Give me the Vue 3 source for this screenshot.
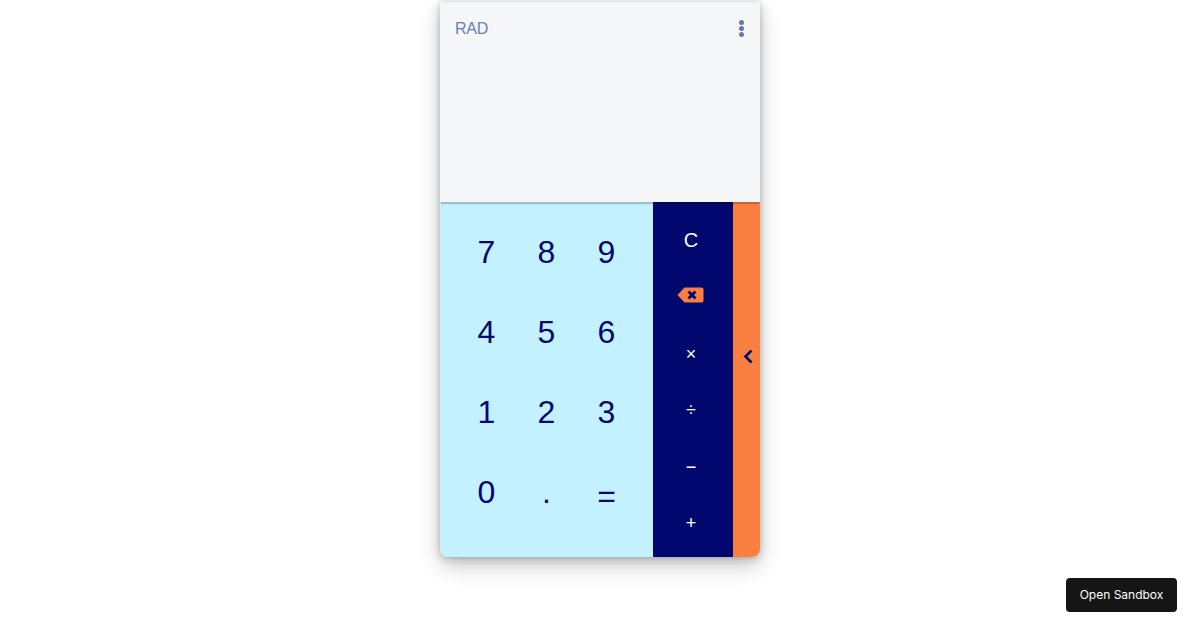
<template>
  <main class="page">
    <section class="calculator">
      <header class="screen">
        <div class="screen-top">
          <span class="mode">RAD</span>
          <button class="menu" aria-label="Menu">
            <i></i><i></i><i></i>
          </button>
        </div>
      </header>
      <div class="keypad">
        <div class="numbers">
          <button
            v-for="key in numberKeys"
            :key="key"
            class="num"
            :class="{ 'num-equals': key === '=' }"
          >{{ key }}</button>
        </div>
        <div class="operators">
          <button class="op op-clear">C</button>
          <button class="op op-back" aria-label="Backspace">
            <svg width="27" height="16" viewBox="0 0 27 16">
              <path d="M7.5 .5H24.5a2 2 0 0 1 2 2V13.5a2 2 0 0 1-2 2H7.5L.5 8Z" fill="#fa7f40" />
              <path d="M11.5 4.5l7 7M18.5 4.5l-7 7" stroke="#00076e" stroke-width="2.8" />
            </svg>
          </button>
          <button v-for="key in operatorKeys" :key="key" class="op op-sign">{{ key }}</button>
        </div>
        <button class="drawer" aria-label="Open drawer">
          <svg width="10" height="15" viewBox="0 0 10 15">
            <path d="M8.5 1.5 2.5 7.5 8.5 13.5" fill="none" stroke="#00076e" stroke-width="2.6" />
          </svg>
        </button>
      </div>
    </section>
    <a class="sandbox">Open Sandbox</a>
  </main>
</template>

<script setup>
const numberKeys = ['7', '8', '9', '4', '5', '6', '1', '2', '3', '0', '.', '=']
const operatorKeys = ['×', '÷', '−', '+']
</script>

<style scoped>
.page {
  position: relative;
  height: 630px;
  padding-top: 2px;
  box-sizing: border-box;
  background: #fff;
  font-family: "Liberation Sans", Arial, sans-serif;
  overflow: hidden;
}
.calculator {
  width: 320px;
  height: 555px;
  margin: 0 auto;
  display: flex;
  flex-direction: column;
  border-radius: 2px 2px 8px 8px;
  overflow: hidden;
  box-shadow: 0 9px 22px rgba(0, 0, 0, 0.2), 0 3px 10px rgba(0, 0, 0, 0.16), 0 0 5px rgba(0, 0, 0, 0.12);
}
button {
  border: 0;
  padding: 0;
  background: none;
  font-family: inherit;
  display: flex;
  align-items: center;
  justify-content: center;
}
.screen {
  height: 200px;
  flex: none;
  background: #f4f6f8;
  position: relative;
  z-index: 1;
  box-shadow: 0 3px 1px -1px rgba(0, 0, 0, 0.2);
}
.screen-top {
  display: flex;
  justify-content: space-between;
  align-items: center;
  padding: 18px 16px 0 15px;
}
.mode {
  font-size: 16px;
  line-height: 18px;
  letter-spacing: -0.3px;
  color: #6680b0;
}
.menu {
  width: 5px;
  flex-direction: column;
  gap: 1px;
  margin-top: -2px;
}
.menu i {
  display: block;
  width: 5px;
  height: 5px;
  border-radius: 50%;
  background: #6678aa;
}
.keypad {
  flex: 1;
  display: flex;
  min-height: 0;
}
.numbers {
  width: 213px;
  box-sizing: border-box;
  padding: 10px 17px 0 16.5px;
  display: grid;
  grid-template-columns: repeat(3, 60px);
  grid-auto-rows: 80px;
  background: #c4f1ff;
}
.num {
  font-size: 32px;
  color: #00076e;
}
.num-equals {
  padding-top: 8px;
}
.operators {
  width: 80px;
  box-sizing: border-box;
  padding: 10px 4px 0 0;
  display: flex;
  flex-direction: column;
  background: #00076e;
}
.op {
  height: 56.4px;
  font-size: 18px;
  color: #fff;
}
.op-clear {
  font-size: 20px;
}
.op-back {
  padding: 0 2px 3px 0;
}
.op-sign {
  padding-top: 3px;
}
.drawer {
  flex: 1;
  padding: 0 0 47px 3px;
  background: #fa7f40;
}
.sandbox {
  position: absolute;
  left: 1066px;
  top: 578px;
  width: 111px;
  height: 34px;
  padding-bottom: 1px;
  box-sizing: border-box;
  display: flex;
  align-items: center;
  justify-content: center;
  border-radius: 4px;
  background: #151515;
  color: #fff;
  font-family: Inter, sans-serif;
  font-size: 12px;
}
</style>

<style>
body {
  background: #fff;
}
</style>
